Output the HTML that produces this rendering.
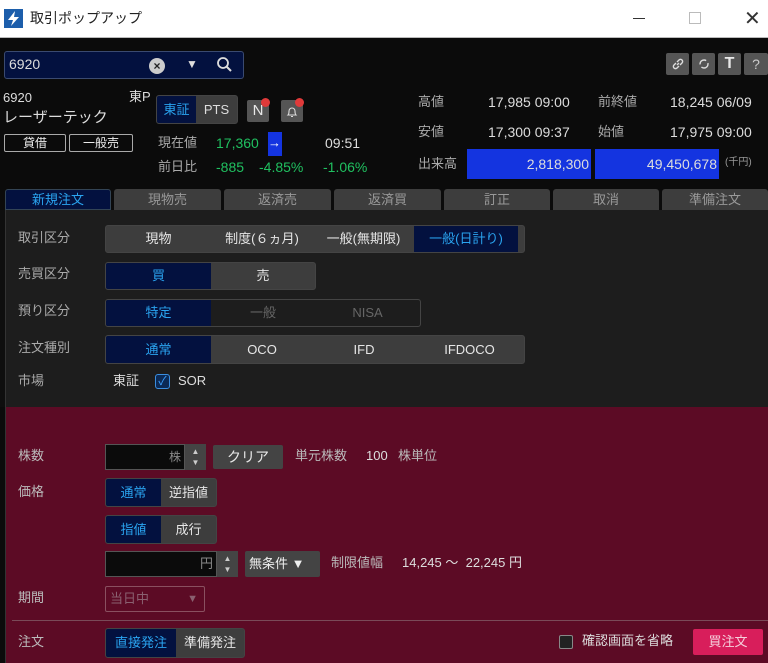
<!DOCTYPE html>
<html><head><meta charset="utf-8"><style>
*{margin:0;padding:0;box-sizing:border-box}
body{width:768px;height:663px;overflow:hidden;background:#0b0b0b;font-family:"Liberation Sans","Noto Sans CJK JP",sans-serif;font-size:13px;color:#ddd;position:relative;line-height:1.2}
.a{position:absolute;white-space:nowrap}
.btn{position:absolute;display:flex;align-items:center;justify-content:center;background:#444;color:#e8e8e8;font-size:13px}
.lbl{position:absolute;color:#aaa;font-size:13px}
.seg{position:absolute;display:flex;border:1px solid #444;border-radius:3px;overflow:hidden;background:#3d3d3d}
.seg div{display:flex;align-items:center;justify-content:center;color:#e6e6e6;font-size:13px}
.tab{position:absolute;top:189px;height:21px;background:#3d3d3d;color:#999;display:flex;align-items:center;justify-content:center;font-size:13px;border-radius:3px 3px 0 0}
.seg div.sel,.tab.sel,.sel{background:#03113f;color:#2aa4f0}
</style></head><body>
<div class="a" style="left:0;top:0;width:768px;height:38px;background:#fff;border-bottom:1px solid #bbb"></div>
<svg class="a" style="left:4px;top:9px" width="19" height="19" viewBox="0 0 19 19"><rect width="19" height="19" fill="#1c5eab"/><path d="M11 2 L4 11 H9 L7 17 L15 8 H10 Z" fill="#fff"/></svg>
<div class="a" style="left:30px;top:10px;color:#222;font-size:14px">取引ポップアップ</div>
<div class="a" style="left:633px;top:18px;width:12px;height:1px;background:#333"></div>
<div class="a" style="left:689px;top:12px;width:12px;height:12px;border:1px solid #bbb"></div>
<div class="a" style="left:744px;top:7px;color:#333;font-size:20px">✕</div>
<div class="a" style="left:4px;top:51px;width:240px;height:28px;background:#03113f;border:1px solid #3a4a70;border-radius:3px"></div>
<div class="a" style="left:9px;top:56px;color:#ddd;font-size:14px">6920</div>
<div class="a" style="left:149px;top:58px;width:16px;height:16px;border-radius:50%;background:#ccc;color:#222;font-size:12px;line-height:16px;text-align:center;font-weight:bold">×</div>
<div class="a" style="left:186px;top:57px;color:#ddd;font-size:12px">▼</div>
<svg class="a" style="left:216px;top:56px" width="17" height="17" viewBox="0 0 17 17"><circle cx="7" cy="7" r="5" stroke="#ddd" stroke-width="1.8" fill="none"/><path d="M11 11 L15 15" stroke="#ddd" stroke-width="2"/></svg>
<div class="btn" style="left:666px;top:53px;width:23px;height:22px;border-radius:2px;background:#555"><svg width="14" height="14" viewBox="0 0 14 14"><path d="M6 8 L8 6 M5 6 L3 8 a2 2 0 0 0 3 3 L8 9 M9 8 L11 6 a2 2 0 0 0 -3 -3 L6 5" stroke="#ddd" stroke-width="1.4" fill="none"/></svg></div>
<div class="btn" style="left:692px;top:53px;width:23px;height:22px;border-radius:2px;background:#555"><svg width="14" height="14"><circle cx="7" cy="7" r="4" stroke="#ddd" stroke-width="1.4" fill="none" stroke-dasharray="9 3"/></svg></div>
<div class="btn" style="left:718px;top:53px;width:23px;height:22px;border-radius:2px;background:#555;font-weight:bold;font-size:16px">T</div>
<div class="btn" style="left:744px;top:53px;width:24px;height:22px;border-radius:2px;background:#555;font-size:14px;color:#ccc">?</div>
<div class="a" style="left:3px;top:90px;font-size:13px;color:#ddd">6920</div>
<div class="a" style="left:129px;top:89px;font-size:13px;color:#ddd">東P</div>
<div class="a" style="left:3px;top:109px;font-size:15px;color:#ddd">レーザーテック</div>
<div class="a" style="left:4px;top:134px;width:62px;height:18px;border:1px solid #aaa;border-radius:2px;text-align:center;font-size:12px;line-height:16px;color:#eee">貸借</div>
<div class="a" style="left:69px;top:134px;width:64px;height:18px;border:1px solid #aaa;border-radius:2px;text-align:center;font-size:12px;line-height:16px;color:#eee">一般売</div>
<div class="seg" style="left:156px;top:95px;width:82px;height:29px"><div class="sel" style="width:40px">東証</div><div style="width:42px;color:#ddd">PTS</div></div>
<div class="btn" style="left:247px;top:100px;width:22px;height:22px;border-radius:2px;background:#555;font-size:15px">N</div>
<div class="a" style="left:261px;top:98px;width:9px;height:9px;border-radius:50%;background:#e03a3a"></div>
<div class="btn" style="left:281px;top:100px;width:22px;height:22px;border-radius:2px;background:#555"><svg width="12" height="13"><path d="M2 10 Q3 9 3 6 a3 3 0 0 1 6 0 Q9 9 10 10 Z M5 11.5 H7" stroke="#ddd" fill="none" stroke-width="1.1"/></svg></div>
<div class="a" style="left:295px;top:98px;width:9px;height:9px;border-radius:50%;background:#e03a3a"></div>
<div class="a" style="left:158px;top:135px;color:#aaa">現在値</div>
<div class="a" style="left:216px;top:135px;color:#20c060;font-size:14px">17,360</div>
<div class="a" style="left:268px;top:132px;width:14px;height:24px;background:#1434e0;color:#fff;font-size:13px;line-height:22px">→</div>
<div class="a" style="left:325px;top:135px;color:#ddd;font-size:14px">09:51</div>
<div class="a" style="left:158px;top:159px;color:#aaa">前日比</div>
<div class="a" style="left:216px;top:159px;color:#20c060;font-size:14px">-885</div>
<div class="a" style="left:259px;top:159px;color:#20c060;font-size:14px">-4.85%</div>
<div class="a" style="left:323px;top:159px;color:#20c060;font-size:14px">-1.06%</div>
<div class="a" style="left:418px;top:94px;color:#aaa">高値</div>
<div class="a" style="left:488px;top:94px;color:#ddd;font-size:14px">17,985 09:00</div>
<div class="a" style="left:598px;top:94px;color:#aaa">前終値</div>
<div class="a" style="left:670px;top:94px;color:#ddd;font-size:14px">18,245 06/09</div>
<div class="a" style="left:418px;top:124px;color:#aaa">安値</div>
<div class="a" style="left:488px;top:124px;color:#ddd;font-size:14px">17,300 09:37</div>
<div class="a" style="left:598px;top:124px;color:#aaa">始値</div>
<div class="a" style="left:670px;top:124px;color:#ddd;font-size:14px">17,975 09:00</div>
<div class="a" style="left:418px;top:156px;color:#aaa">出来高</div>
<div class="a" style="left:467px;top:149px;width:124px;height:30px;background:#1434e0;color:#ddd;font-size:14px;text-align:right;padding-right:2px;line-height:30px">2,818,300</div>
<div class="a" style="left:595px;top:149px;width:124px;height:30px;background:#1434e0;color:#ddd;font-size:14px;text-align:right;padding-right:2px;line-height:30px">49,450,678</div>
<div class="a" style="left:725px;top:157px;color:#999;font-size:10px">(千円)</div>
<div class="tab sel" style="left:5px;width:106px;border:1px solid #345">新規注文</div>
<div class="tab" style="left:114px;width:107px">現物売</div>
<div class="tab" style="left:224px;width:107px">返済売</div>
<div class="tab" style="left:334px;width:107px">返済買</div>
<div class="tab" style="left:444px;width:106px">訂正</div>
<div class="tab" style="left:553px;width:106px">取消</div>
<div class="tab" style="left:662px;width:106px">準備注文</div>
<div class="a" style="left:0;top:210px;width:768px;height:197px;background:#1d1d1d;border-left:5px solid #0e0e0e"></div>
<div class="a" style="left:5px;top:210px;width:1px;height:453px;background:#333"></div>
<div class="lbl" style="left:18px;top:230px">取引区分</div>
<div class="seg" style="left:105px;top:225px;width:420px;height:28px"><div style="width:105px">現物</div><div style="width:102px">制度(６ヵ月)</div><div style="width:101px">一般(無期限)</div><div class="sel" style="width:104px">一般(日計り)</div></div>
<div class="lbl" style="left:18px;top:266px">売買区分</div>
<div class="seg" style="left:105px;top:262px;width:211px;height:28px"><div class="sel" style="width:105px">買</div><div style="width:104px">売</div></div>
<div class="lbl" style="left:18px;top:303px">預り区分</div>
<div class="seg" style="left:105px;top:299px;width:316px;height:28px;background:#1d1d1d"><div class="sel" style="width:105px">特定</div><div style="width:104px;color:#666">一般</div><div style="width:105px;color:#666">NISA</div></div>
<div class="lbl" style="left:18px;top:340px">注文種別</div>
<div class="seg" style="left:105px;top:335px;width:420px;height:29px"><div class="sel" style="width:105px">通常</div><div style="width:102px">OCO</div><div style="width:102px">IFD</div><div style="width:109px">IFDOCO</div></div>
<div class="lbl" style="left:18px;top:373px">市場</div>
<div class="a" style="left:113px;top:373px;color:#ddd">東証</div>
<div class="a" style="left:155px;top:374px;width:15px;height:15px;border:1px solid #3a8ee0;border-radius:3px;background:#0c2a55;color:#3aa0ff;font-size:12px;line-height:13px;text-align:center">✓</div>
<div class="a" style="left:178px;top:373px;color:#ddd">SOR</div>
<div class="a" style="left:6px;top:407px;width:762px;height:256px;background:#5c0b25"></div>
<div class="lbl" style="left:18px;top:448px;color:#bbb">株数</div>
<div class="a" style="left:105px;top:444px;width:80px;height:26px;background:#0b0b0b;border:1px solid #555;color:#888;text-align:right;padding-right:3px;line-height:24px;font-size:12px">株</div>
<div class="a" style="left:185px;top:444px;width:21px;height:26px;background:#444;color:#ccc;font-size:8px;text-align:center;line-height:11px;padding-top:2px">▲<br>▼</div>
<div class="btn" style="left:213px;top:445px;width:70px;height:24px;border-radius:2px;font-size:14px">クリア</div>
<div class="a" style="left:295px;top:448px;color:#bbb">単元株数</div>
<div class="a" style="left:366px;top:448px;color:#ddd">100</div>
<div class="a" style="left:398px;top:448px;color:#bbb">株単位</div>
<div class="lbl" style="left:18px;top:484px;color:#bbb">価格</div>
<div class="seg" style="left:105px;top:478px;width:112px;height:29px"><div class="sel" style="width:55px">通常</div><div style="width:55px">逆指値</div></div>
<div class="seg" style="left:105px;top:515px;width:112px;height:29px"><div class="sel" style="width:55px">指値</div><div style="width:55px">成行</div></div>
<div class="a" style="left:105px;top:551px;width:112px;height:26px;background:#0b0b0b;border:1px solid #555;color:#888;text-align:right;padding-right:3px;line-height:24px">円</div>
<div class="a" style="left:217px;top:551px;width:21px;height:26px;background:#444;color:#ccc;font-size:8px;text-align:center;line-height:11px;padding-top:2px">▲<br>▼</div>
<div class="a" style="left:245px;top:551px;width:75px;height:26px;background:#444;border-radius:2px;color:#eee;line-height:26px;padding-left:4px">無条件 ▼</div>
<div class="a" style="left:331px;top:555px;color:#bbb">制限値幅</div>
<div class="a" style="left:402px;top:555px;color:#ddd">14,245 ～ &nbsp;22,245 円</div>
<div class="lbl" style="left:18px;top:590px;color:#bbb">期間</div>
<div class="a" style="left:105px;top:586px;width:100px;height:26px;border:1px solid #8a5060;border-radius:2px;color:#8a6070;line-height:24px;padding-left:4px">当日中<span style="position:absolute;right:6px;font-size:11px">▼</span></div>
<div class="a" style="left:12px;top:620px;width:756px;height:1px;background:#7a4a58"></div>
<div class="lbl" style="left:18px;top:634px;color:#bbb">注文</div>
<div class="seg" style="left:105px;top:628px;width:140px;height:30px"><div class="sel" style="width:70px">直接発注</div><div style="width:68px">準備発注</div></div>
<div class="a" style="left:559px;top:635px;width:14px;height:14px;border:1px solid #888;border-radius:2px;background:#222"></div>
<div class="a" style="left:582px;top:633px;color:#ddd">確認画面を省略</div>
<div class="a" style="left:693px;top:629px;width:70px;height:26px;background:#d81e5b;border-radius:2px;color:#f5d0dc;text-align:center;line-height:26px">買注文</div>
</body></html>
